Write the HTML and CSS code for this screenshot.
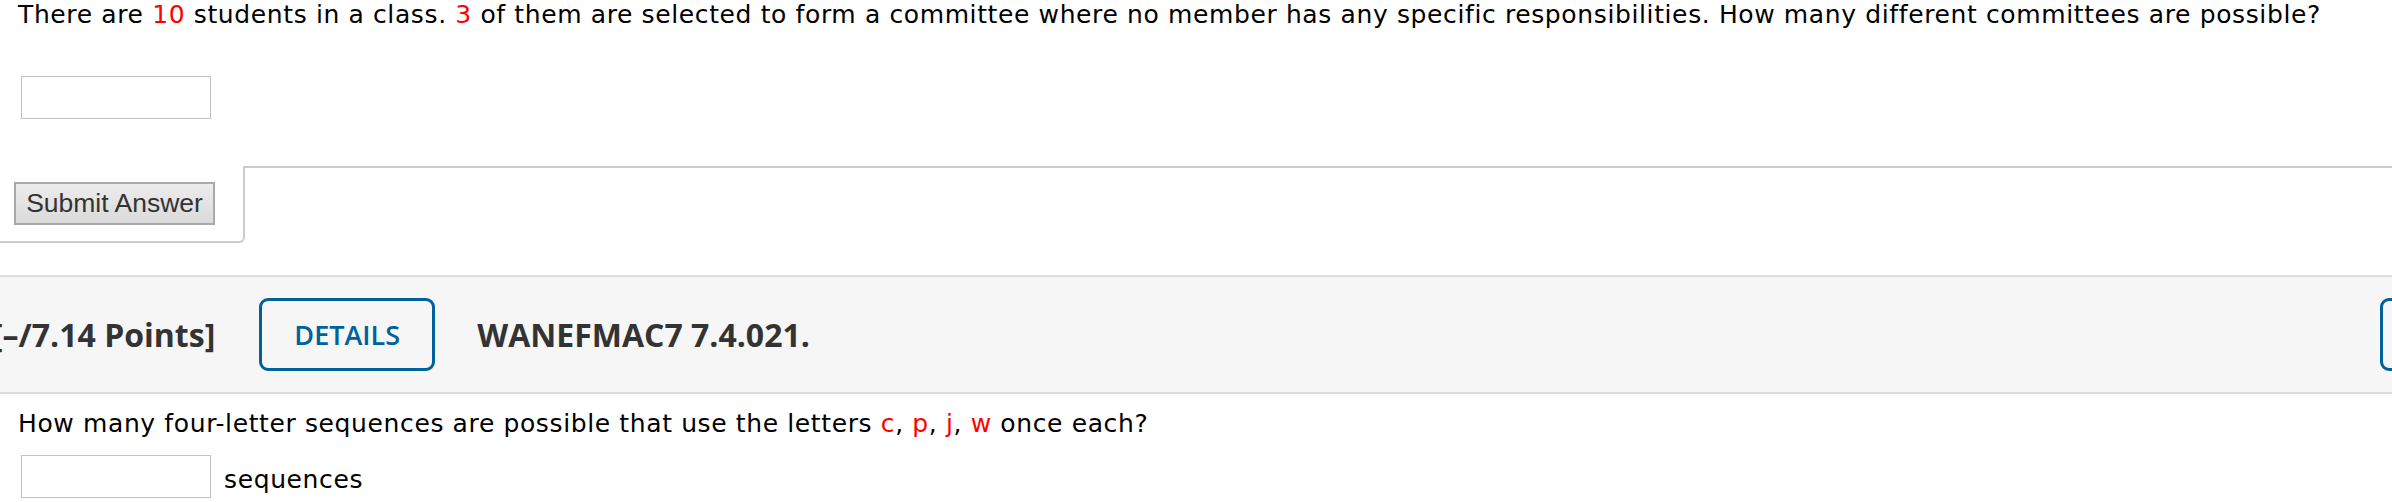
FILE: index.html
```html
<!DOCTYPE html>
<html lang="en">
<head>
<meta charset="utf-8">
<title>Question</title>
<link rel="stylesheet" href="styles.css">
</head>
<body>
<main class="page">
  <section class="question q1">
    <p class="qtext">There are <span class="red">10</span> students in a class. <span class="red">3</span> of them are selected to form a committee where no member has any specific responsibilities. How many different committees are possible?</p>
    <div class="answer-line">
      <input class="answer" type="text" aria-label="answer">
    </div>
  </section>

  <div class="submit-row">
    <div class="submit-cell">
      <button class="submit" type="button">Submit Answer</button>
    </div>
    <div class="submit-rest"></div>
  </div>

  <header class="qhead">
    <span class="points">[–/7.14 Points]</span>
    <button class="details" type="button">DETAILS</button>
    <span class="qid">WANEFMAC7 7.4.021.</span>
    <button class="details edge" type="button" aria-label="more"></button>
  </header>

  <section class="question q2">
    <p class="qtext">How many four-letter sequences are possible that use the letters <span class="red">c</span>, <span class="red">p</span>, <span class="red">j</span>, <span class="red">w</span> once each?</p>
    <div class="answer-line">
      <input class="answer" type="text" aria-label="answer">
      <span class="unit">sequences</span>
    </div>
  </section>
</main>
</body>
</html>
```

FILE: styles.css
```css
html, body {
  margin: 0;
  padding: 0;
  background: #ffffff;
}

body {
  width: 2392px;
  height: 502px;
  overflow: hidden;
  font-family: "DejaVu Sans", Verdana, sans-serif;
  color: #000000;
}

.page {
  display: flex;
  flex-direction: column;
}

.question {
  padding-left: 18px;
}

.qtext {
  margin: 0;
  font-size: 25px;
  letter-spacing: 0.62px;
  line-height: 29px;
  white-space: nowrap;
}

.red {
  color: #ff0000;
}

.answer-line {
  display: flex;
  align-items: center;
  gap: 13px;
  margin-left: 3px;
}

.q1 .answer-line {
  margin-top: 47px;
}

.q2 {
  margin-top: 15px;
}

.q2 .answer-line {
  margin-top: 17px;
}

.answer {
  box-sizing: border-box;
  width: 190px;
  height: 43px;
  margin: 0;
  padding: 0 6px;
  border: 1px solid #c2c2c2;
  border-radius: 0;
  background: #ffffff;
  font: inherit;
  font-size: 24px;
}

.unit {
  font-size: 25px;
  letter-spacing: 0.62px;
  line-height: 29px;
  padding-top: 6px;
}

/* submit row */
.submit-row {
  display: flex;
  margin-top: 47px;
}

.submit-cell {
  box-sizing: border-box;
  width: 245px;
  height: 77px;
  padding: 16px 0 0 14px;
  border-right: 2px solid #cccccc;
  border-bottom: 2px solid #cccccc;
  border-bottom-right-radius: 6px;
}

.submit {
  box-sizing: border-box;
  width: 201px;
  height: 43px;
  margin: 0;
  padding: 0;
  border: 2px solid #a9a9a9;
  border-radius: 0;
  background: linear-gradient(#ececec, #dadada);
  color: #333333;
  font-family: "Liberation Sans", Arial, sans-serif;
  font-size: 26.5px;
  line-height: 39px;
}

.submit-rest {
  flex: 1;
  border-top: 2px solid #cccccc;
}

/* question header */
.qhead {
  box-sizing: border-box;
  display: flex;
  align-items: center;
  gap: 44px;
  height: 119px;
  margin-top: 32px;
  border-top: 2px solid #dddddd;
  border-bottom: 2px solid #dddddd;
  background: #f6f6f6;
  overflow: hidden;
  font-family: "Open Sans", "DejaVu Sans", sans-serif;
  color: #333333;
}

.points,
.qid {
  font-size: 32px;
  font-weight: 700;
  white-space: nowrap;
}

.points {
  margin-left: -8px;
}

.qid {
  margin-left: -2px;
}

.details {
  box-sizing: border-box;
  flex: none;
  width: 176px;
  height: 73px;
  margin: 0;
  padding: 0;
  border: 3px solid #00629b;
  border-radius: 9px;
  background: transparent;
  color: #00629b;
  font-family: "Open Sans", "DejaVu Sans", sans-serif;
  font-size: 27px;
  font-weight: 600;
}

.details.edge {
  margin-left: auto;
  margin-right: -164px;
}
```
